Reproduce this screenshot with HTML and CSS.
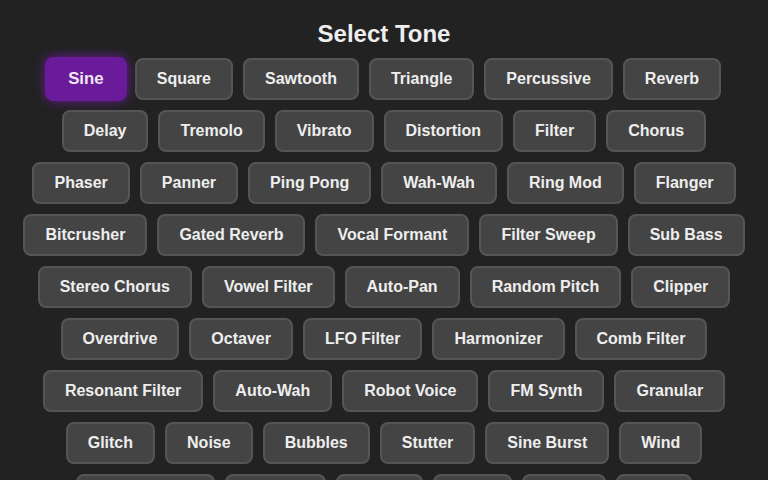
FILE: index.html
```html
<!DOCTYPE html>
<html lang="en">
<head>
<meta charset="utf-8">
<title>Select Tone</title>
<link rel="stylesheet" href="styles.css">
</head>
<body>
<main class="app">
  <h1 class="title">Select Tone</h1>
  <div class="tones">
    <button class="tone active">Sine</button>
    <button class="tone">Square</button>
    <button class="tone">Sawtooth</button>
    <button class="tone">Triangle</button>
    <button class="tone">Percussive</button>
    <button class="tone">Reverb</button>
    <button class="tone">Delay</button>
    <button class="tone">Tremolo</button>
    <button class="tone">Vibrato</button>
    <button class="tone">Distortion</button>
    <button class="tone">Filter</button>
    <button class="tone">Chorus</button>
    <button class="tone">Phaser</button>
    <button class="tone">Panner</button>
    <button class="tone">Ping Pong</button>
    <button class="tone">Wah-Wah</button>
    <button class="tone">Ring Mod</button>
    <button class="tone">Flanger</button>
    <button class="tone">Bitcrusher</button>
    <button class="tone">Gated Reverb</button>
    <button class="tone">Vocal Formant</button>
    <button class="tone">Filter Sweep</button>
    <button class="tone">Sub Bass</button>
    <button class="tone">Stereo Chorus</button>
    <button class="tone">Vowel Filter</button>
    <button class="tone">Auto-Pan</button>
    <button class="tone">Random Pitch</button>
    <button class="tone">Clipper</button>
    <button class="tone">Overdrive</button>
    <button class="tone">Octaver</button>
    <button class="tone">LFO Filter</button>
    <button class="tone">Harmonizer</button>
    <button class="tone">Comb Filter</button>
    <button class="tone">Resonant Filter</button>
    <button class="tone">Auto-Wah</button>
    <button class="tone">Robot Voice</button>
    <button class="tone">FM Synth</button>
    <button class="tone">Granular</button>
    <button class="tone">Glitch</button>
    <button class="tone">Noise</button>
    <button class="tone">Bubbles</button>
    <button class="tone">Stutter</button>
    <button class="tone">Sine Burst</button>
    <button class="tone">Wind</button>
    <button class="tone">Pitch Shifter</button>
    <button class="tone">Sparkle</button>
    <button class="tone">Laser</button>
    <button class="tone">Rain</button>
    <button class="tone">Siren</button>
    <button class="tone">Drip</button>
  </div>
</main>
</body>
</html>
```
FILE: styles.css
```css
html, body {
  margin: 0;
  background: #222222;
  overflow: hidden;
}

body {
  font-family: "Liberation Sans", Arial, sans-serif;
  color: #eeeeee;
}

.app {
  padding: 20px;
  display: flex;
  flex-direction: column;
  gap: 10px;
}

.title {
  margin: 0;
  font-size: 24px;
  font-weight: bold;
  text-align: center;
  color: #eeeeee;
}

.tones {
  display: flex;
  flex-wrap: wrap;
  justify-content: center;
  gap: 10px;
}

.tone {
  font-family: "Liberation Sans", Arial, sans-serif;
  font-size: 16px;
  font-weight: bold;
  line-height: normal;
  color: #eeeeee;
  background: #444444;
  border: 2px solid #555555;
  border-radius: 8px;
  padding: 10px 20px;
  margin: 0;
  cursor: pointer;
}

.tone.active {
  background: #6a1b9a;
  border-color: #6a1b9a;
  color: #f3e5f5;
  transform: scale(1.05);
  box-shadow: 0 0 10px #6a1b9a;
}
```
